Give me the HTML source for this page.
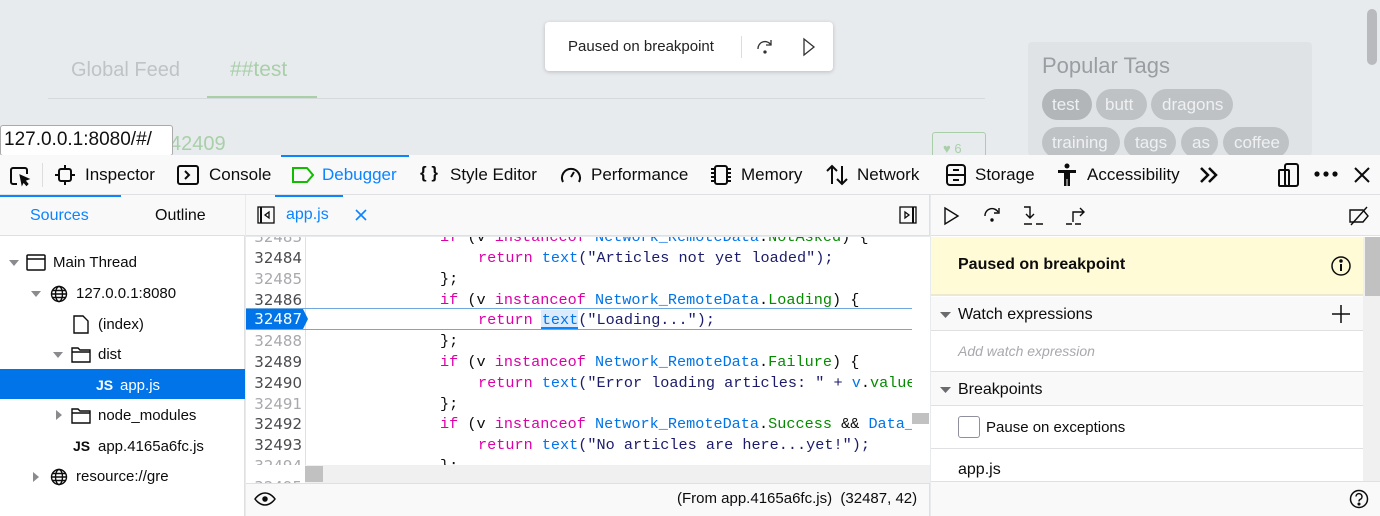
<!DOCTYPE html>
<html><head><meta charset="utf-8"><style>
*{box-sizing:border-box;margin:0;padding:0}
body{width:1380px;height:516px;overflow:hidden;position:relative;background:#e8ebee;font-family:"Liberation Sans","DejaVu Sans",sans-serif;color:#0c0c0d}
.a{position:absolute}
.mono{font-family:"Liberation Mono","DejaVu Sans Mono",monospace;font-size:15.2px;white-space:pre}
.k{color:#dd00a9}.b{color:#0074e8}.g{color:#058b00}.s{color:#1b1b6a}.d{color:#0c0c0d}
.ln{position:absolute;left:246px;width:56px;text-align:right;color:#4a4a4f;font-size:15px;font-family:"DejaVu Sans",sans-serif}
.ln.l{color:#a8a8ad}
.tab{position:absolute;top:165px;font-size:17px;color:#0c0c0d}
.tree{position:absolute;font-size:15px;color:#0c0c0d}
</style></head><body>
<!-- page -->
<div class="a" style="left:71px;top:59px;font-size:20px;color:#c0c3c6">Global Feed</div>
<div class="a" style="left:230px;top:58px;font-size:21px;color:#a9cfa9">##test</div>
<div class="a" style="left:207px;top:96px;width:110px;height:3px;background:#a9cfa9"></div>
<div class="a" style="left:48px;top:98px;width:937px;height:1px;background:#d6d9dc"></div>
<div class="a" style="left:170px;top:133px;font-size:20px;color:#a9cfa9">42409</div>
<div class="a" style="left:932px;top:132px;width:54px;height:26px;border:1px solid #a9cfa9;border-radius:3px;color:#a9cfa9;font-size:13px;padding:8px 0 0 10px">♥ 6</div>
<div class="a" style="left:1028px;top:42px;width:284px;height:114px;background:#e0e3e6;border-radius:4px"></div>
<div class="a" style="left:1042px;top:53px;font-size:22px;color:#9a9da1">Popular Tags</div>
<div class="a" style="left:1042px;top:89px;height:31px;width:50px;border-radius:16px;background:#b3b6b9"></div>
<div class="a" style="left:1096px;top:89px;height:31px;width:51px;border-radius:16px;background:#bfc2c5"></div>
<div class="a" style="left:1151px;top:89px;height:31px;width:82px;border-radius:16px;background:#bfc2c5"></div>
<div class="a" style="left:1042px;top:127px;height:31px;width:78px;border-radius:16px;background:#bfc2c5"></div>
<div class="a" style="left:1124px;top:127px;height:31px;width:52px;border-radius:16px;background:#bfc2c5"></div>
<div class="a" style="left:1181px;top:127px;height:31px;width:37px;border-radius:16px;background:#bfc2c5"></div>
<div class="a" style="left:1223px;top:127px;height:31px;width:66px;border-radius:16px;background:#bfc2c5"></div>
<div class="a" style="left:1052px;top:95px;font-size:17px;color:#eef0f2">test</div>
<div class="a" style="left:1105px;top:95px;font-size:17px;color:#eef0f2">butt</div>
<div class="a" style="left:1162px;top:95px;font-size:17px;color:#eef0f2">dragons</div>
<div class="a" style="left:1052px;top:133px;font-size:17px;color:#eef0f2">training</div>
<div class="a" style="left:1135px;top:133px;font-size:17px;color:#eef0f2">tags</div>
<div class="a" style="left:1192px;top:133px;font-size:17px;color:#eef0f2">as</div>
<div class="a" style="left:1234px;top:133px;font-size:17px;color:#eef0f2">coffee</div>
<div class="a" style="left:1367px;top:9px;width:10px;height:56px;border-radius:5px;background:#b8babd"></div>
<div class="a" style="left:0;top:125px;width:173px;height:31px;background:#fff;border:1px solid #aaa;border-radius:3px;font-size:19px;padding:3px 0 0 3px;color:#111">127.0.0.1:8080/#/</div>
<div class="a" style="left:545px;top:22px;width:288px;height:49px;background:#fff;border-radius:4px;box-shadow:0 1px 4px rgba(0,0,0,.2)"></div>
<div class="a" style="left:568px;top:38px;font-size:15px;color:#222">Paused on breakpoint</div>
<div class="a" style="left:741px;top:36px;width:1px;height:22px;background:#ddd"></div>
<svg class="a" style="left:754px;top:36px" width="22" height="22" viewBox="0 0 22 22" fill="none" stroke="#333" stroke-width="1.3"><path d="M4 13a7 7 0 0 1 13-4"/><path d="M17 4v5h-5"/><circle cx="11" cy="16" r="1" fill="#333"/></svg>
<svg class="a" style="left:800px;top:37px" width="18" height="20" viewBox="0 0 18 20" fill="none" stroke="#333" stroke-width="1.3"><path d="M4 2l10 8-10 8z"/></svg>

<!-- devtools toolbar -->
<div class="a" style="left:0;top:155px;width:1380px;height:40px;background:#f9f9fa;border-bottom:1px solid #e0e0e2"></div>
<div class="a" style="left:281px;top:155px;width:128px;height:2px;background:#0a84ff"></div>
<svg class="a" style="left:8px;top:164px" width="24" height="24" viewBox="0 0 24 24" fill="none" stroke="#0c0c0d" stroke-width="2"><path d="M9 20H5a2 2 0 0 1-2-2V6a2 2 0 0 1 2-2h12a2 2 0 0 1 2 2v4"/><path d="M12 11l9 4-4 1.5 3 3.5-1.5 1.5-3-3.5L14 21z" fill="#0c0c0d" stroke-width="1"/></svg>
<div class="a" style="left:42px;top:163px;width:1px;height:24px;background:#ddd"></div>
<svg class="a" style="left:54px;top:164px" width="22" height="22" viewBox="0 0 22 22" fill="none" stroke="#0c0c0d" stroke-width="2"><rect x="5" y="5" width="12" height="12" rx="2"/><path d="M11 1v4M11 17v4M1 11h4M17 11h4"/></svg>
<div class="tab" style="left:85px">Inspector</div>
<svg class="a" style="left:177px;top:165px" width="22" height="20" viewBox="0 0 22 20" fill="none" stroke="#0c0c0d" stroke-width="2"><rect x="1" y="1" width="20" height="18" rx="2"/><path d="M8 6l4 4-4 4"/></svg>
<div class="tab" style="left:209px">Console</div>
<svg class="a" style="left:291px;top:166px" width="24" height="18" viewBox="0 0 24 18" fill="none" stroke="#12bc00" stroke-width="2"><path d="M2 2h14l6 7-6 7H2z"/></svg>
<div class="tab" style="left:322px;color:#0a84ff">Debugger</div>
<div class="tab" style="left:420px;font-weight:bold;top:163px">{ }</div>
<div class="tab" style="left:450px">Style Editor</div>
<svg class="a" style="left:560px;top:165px" width="22" height="20" viewBox="0 0 22 20" fill="none" stroke="#0c0c0d" stroke-width="2"><path d="M3 17a9 9 0 1 1 16 0"/><path d="M11 12l3-5"/></svg>
<div class="tab" style="left:591px">Performance</div>
<svg class="a" style="left:709px;top:164px" width="24" height="22" viewBox="0 0 24 22" fill="none" stroke="#0c0c0d" stroke-width="2"><rect x="6" y="2" width="12" height="18" rx="2"/><path d="M2 5h4M2 9h4M2 13h4M2 17h4M18 5h4M18 9h4M18 13h4M18 17h4"/></svg>
<div class="tab" style="left:741px">Memory</div>
<svg class="a" style="left:825px;top:164px" width="24" height="22" viewBox="0 0 24 22" fill="none" stroke="#0c0c0d" stroke-width="2"><path d="M7 20V2M2 7l5-5 5 5M17 2v18M12 15l5 5 5-5"/></svg>
<div class="tab" style="left:857px">Network</div>
<svg class="a" style="left:945px;top:164px" width="22" height="22" viewBox="0 0 22 22" fill="none" stroke="#0c0c0d" stroke-width="2"><rect x="2" y="1" width="18" height="20" rx="3"/><path d="M2 11h18M8 6h6M8 16h6"/></svg>
<div class="tab" style="left:975px">Storage</div>
<svg class="a" style="left:1057px;top:163px" width="20" height="24" viewBox="0 0 20 24" fill="#0c0c0d"><circle cx="10" cy="3" r="2.5"/><path d="M1 7h18v3h-6v13h-2.5v-7h-1v7H7V10H1z"/></svg>
<div class="tab" style="left:1087px">Accessibility</div>
<svg class="a" style="left:1199px;top:166px" width="20" height="18" fill="none" stroke="#0c0c0d" stroke-width="2.5"><path d="M2 2l7 7-7 7M10 2l7 7-7 7"/></svg>
<svg class="a" style="left:1278px;top:163px" width="22" height="24" viewBox="0 0 22 24" fill="none" stroke="#0c0c0d" stroke-width="2"><rect x="7" y="1" width="13" height="22" rx="2"/><rect x="1" y="7" width="10" height="16" rx="1"/></svg>
<svg class="a" style="left:1314px;top:170px" width="24" height="8" fill="#0c0c0d"><circle cx="3" cy="4" r="2.6"/><circle cx="12" cy="4" r="2.6"/><circle cx="21" cy="4" r="2.6"/></svg>
<svg class="a" style="left:1353px;top:166px" width="18" height="18" viewBox="0 0 18 18" stroke="#0c0c0d" stroke-width="2"><path d="M2 2l14 14M16 2L2 16"/></svg>

<!-- panes -->
<div class="a" style="left:0;top:195px;width:245px;height:321px;background:#fff;border-right:1px solid #e0e0e2"></div>
<div class="a" style="left:0;top:195px;width:245px;height:41px;background:#f9f9fa;border-bottom:1px solid #e0e0e2"></div>
<div class="a" style="left:0;top:195px;width:121px;height:2px;background:#0a84ff"></div>
<div class="a" style="left:30px;top:207px;font-size:16px;color:#0a84ff">Sources</div>
<div class="a" style="left:155px;top:207px;font-size:16px">Outline</div>

<svg class="a" style="left:8px;top:257px" width="12" height="12"><path d="M1 3h10L6 9z" fill="#8a8a8f"/></svg>
<svg class="a" style="left:26px;top:254px" width="20" height="18" fill="none" stroke="#0c0c0d" stroke-width="1.5"><rect x="1" y="1" width="18" height="15" rx="1"/><path d="M1 5h18"/></svg>
<div class="tree" style="left:53px;top:254px">Main Thread</div>
<svg class="a" style="left:30px;top:288px" width="12" height="12"><path d="M1 3h10L6 9z" fill="#8a8a8f"/></svg>
<svg class="a" style="left:50px;top:285px" width="18" height="18" fill="none" stroke="#0c0c0d" stroke-width="1.4"><circle cx="9" cy="9" r="7.5"/><ellipse cx="9" cy="9" rx="3.5" ry="7.5"/><path d="M1.5 9h15M2.5 5.5h13M2.5 12.5h13"/></svg>
<div class="tree" style="left:76px;top:285px">127.0.0.1:8080</div>
<svg class="a" style="left:73px;top:315px" width="16" height="19" fill="none" stroke="#0c0c0d" stroke-width="1.4"><path d="M1 1h9l5 5v12H1z"/></svg>
<div class="tree" style="left:98px;top:316px">(index)</div>
<svg class="a" style="left:52px;top:349px" width="12" height="12"><path d="M1 3h10L6 9z" fill="#8a8a8f"/></svg>
<svg class="a" style="left:71px;top:346px" width="20" height="17" fill="none" stroke="#0c0c0d" stroke-width="1.4"><path d="M1 2h6l2 2h10v12H1z"/><path d="M1 6h18"/></svg>
<div class="tree" style="left:98px;top:346px">dist</div>
<div class="a" style="left:0;top:369px;width:245px;height:30px;background:#0074e8"></div>
<div class="tree" style="left:96px;top:377px;color:#fff;font-weight:bold;font-size:14px">JS</div>
<div class="tree" style="left:120px;top:377px;color:#fff">app.js</div>
<svg class="a" style="left:53px;top:409px" width="12" height="12"><path d="M3 1v10l6-5z" fill="#8a8a8f"/></svg>
<svg class="a" style="left:71px;top:407px" width="20" height="17" fill="none" stroke="#0c0c0d" stroke-width="1.4"><path d="M1 2h6l2 2h10v12H1z"/><path d="M1 6h18"/></svg>
<div class="tree" style="left:98px;top:407px">node_modules</div>
<div class="tree" style="left:73px;top:438px;font-weight:bold;font-size:14px">JS</div>
<div class="tree" style="left:98px;top:438px">app.4165a6fc.js</div>
<svg class="a" style="left:30px;top:471px" width="12" height="12"><path d="M3 1v10l6-5z" fill="#8a8a8f"/></svg>
<svg class="a" style="left:50px;top:468px" width="18" height="18" fill="none" stroke="#0c0c0d" stroke-width="1.4"><circle cx="9" cy="9" r="7.5"/><ellipse cx="9" cy="9" rx="3.5" ry="7.5"/><path d="M1.5 9h15M2.5 5.5h13M2.5 12.5h13"/></svg>
<div class="tree" style="left:76px;top:468px">resource://gre</div>

<!-- editor -->
<div class="a" style="left:246px;top:195px;width:684px;height:41px;background:#f9f9fa;border-bottom:1px solid #e0e0e2;border-right:1px solid #e0e0e2"></div>
<div class="a" style="left:275px;top:195px;width:68px;height:2px;background:#0a84ff"></div>
<svg class="a" style="left:257px;top:206px" width="18" height="18" fill="none" stroke="#0c0c0d" stroke-width="1.3"><rect x="1" y="1" width="16" height="16"/><path d="M4 1v16" stroke-width="2"/><path d="M12 6l-4 3 4 3z"/></svg>
<div class="a" style="left:286px;top:206px;font-size:16px;color:#0a84ff">app.js</div>
<svg class="a" style="left:355px;top:209px" width="12" height="12" stroke="#0a84ff" stroke-width="1.6"><path d="M1 1l10 10M11 1L1 11"/></svg>
<svg class="a" style="left:899px;top:206px" width="18" height="18" fill="none" stroke="#0c0c0d" stroke-width="1.3"><rect x="1" y="1" width="16" height="16"/><path d="M14 1v16" stroke-width="2"/><path d="M6 6l4 3-4 3z"/></svg>

<div class="a" style="left:246px;top:237px;width:666px;height:228px;overflow:hidden;background:#fff">
 <div class="a" style="left:59px;top:0;width:1px;height:228px;background:#e0e0e2"></div>
</div>
<div class="a" style="left:246px;top:237px;width:666px;height:228px;overflow:hidden">
<div class="ln l" style="left:0;top:-9px">32483</div>
<div class="a mono" style="left:194px;top:-9px"><span class="k">if</span> <span class="d">(v</span> <span class="k">instanceof</span> <span class="b">Network_RemoteData</span>.<span class="g">NotAsked</span>) {</div>
<div class="ln" style="left:0;top:12px">32484</div>
<div class="a mono" style="left:232px;top:12px"><span class="k">return</span> <span class="b">text</span><span class="s">("Articles not yet loaded");</span></div>
<div class="ln l" style="left:0;top:33px">32485</div>
<div class="a mono" style="left:194px;top:33px">};</div>
<div class="ln" style="left:0;top:54px">32486</div>
<div class="a mono" style="left:194px;top:54px"><span class="k">if</span> (v <span class="k">instanceof</span> <span class="b">Network_RemoteData</span>.<span class="g">Loading</span>) {</div>
<div class="a" style="left:0;top:71px;width:666px;height:22px;border-top:1px solid #6fa8dc;border-bottom:1px solid #6fa8dc"></div>
<div class="a" style="left:0;top:72px;width:56px;height:20px;background:#0074e8"></div>
<svg class="a" style="left:55px;top:72px" width="8" height="20"><path d="M0 0h2l5 10-5 10H0z" fill="#0074e8"/></svg>
<div class="ln" style="left:0;top:73px;color:#fff">32487</div>
<div class="a" style="left:295px;top:73px;width:37px;height:19px;background:#dcebfb;border-bottom:2px solid #0a84ff"></div>
<div class="a mono" style="left:232px;top:74px"><span class="k">return</span> <span class="b">text</span><span class="s">("Loading...");</span></div>
<div class="ln l" style="left:0;top:95px">32488</div>
<div class="a mono" style="left:194px;top:95px">};</div>
<div class="ln" style="left:0;top:116px">32489</div>
<div class="a mono" style="left:194px;top:116px"><span class="k">if</span> (v <span class="k">instanceof</span> <span class="b">Network_RemoteData</span>.<span class="g">Failure</span>) {</div>
<div class="ln" style="left:0;top:137px">32490</div>
<div class="a mono" style="left:232px;top:137px"><span class="k">return</span> <span class="b">text</span><span class="s">("Error loading articles: " + </span><span class="b">v</span>.<span class="g">value</span></div>
<div class="ln l" style="left:0;top:158px">32491</div>
<div class="a mono" style="left:194px;top:158px">};</div>
<div class="ln" style="left:0;top:178px">32492</div>
<div class="a mono" style="left:194px;top:178px"><span class="k">if</span> (v <span class="k">instanceof</span> <span class="b">Network_RemoteData</span>.<span class="g">Success</span> &amp;&amp; <span class="b">Data_</span></div>
<div class="ln" style="left:0;top:199px">32493</div>
<div class="a mono" style="left:232px;top:199px"><span class="k">return</span> <span class="b">text</span><span class="s">("No articles are here...yet!");</span></div>
<div class="ln l" style="left:0;top:220px">32494</div>
<div class="a mono" style="left:194px;top:220px">};</div>
</div>
<div class="a" style="left:912px;top:237px;width:18px;height:228px;background:#fff"></div>
<div class="a" style="left:912px;top:413px;width:17px;height:11px;background:#c1c1c1"></div>
<div class="a" style="left:305px;top:465px;width:625px;height:18px;background:#f0f0f0"></div>
<div class="a" style="left:305px;top:466px;width:18px;height:16px;background:#c1c1c1"></div>
<div class="a" style="left:246px;top:465px;width:59px;height:18px;background:#fff;overflow:hidden"><div class="ln l" style="left:0;top:13px">32495</div></div>
<div class="a" style="left:246px;top:483px;width:684px;height:33px;background:#f9f9fa;border-top:1px solid #e0e0e2;border-right:1px solid #e0e0e2"></div>
<svg class="a" style="left:254px;top:491px" width="22" height="16" fill="none" stroke="#0c0c0d" stroke-width="1.5"><path d="M1 8s4-6 10-6 10 6 10 6-4 6-10 6S1 8 1 8z"/><circle cx="11" cy="8" r="2" fill="#0c0c0d"/></svg>
<div class="a" style="left:677px;top:490px;font-size:15px;color:#0c0c0d">(From app.4165a6fc.js)&nbsp;&nbsp;(32487, 42)</div>

<!-- right -->
<div class="a" style="left:931px;top:195px;width:449px;height:321px;background:#fff"></div>
<div class="a" style="left:931px;top:195px;width:449px;height:41px;background:#f9f9fa;border-bottom:1px solid #e0e0e2"></div>
<svg class="a" style="left:943px;top:206px" width="18" height="20" fill="none" stroke="#0c0c0d" stroke-width="1.4"><path d="M2 2l13 8-13 8z"/></svg>
<svg class="a" style="left:982px;top:205px" width="22" height="20" fill="none" stroke="#0c0c0d" stroke-width="1.4"><path d="M3 11a7 7 0 0 1 13-4"/><path d="M17 3v5h-5"/><circle cx="10" cy="15" r="1" fill="#0c0c0d"/></svg>
<svg class="a" style="left:1023px;top:205px" width="22" height="22" fill="none" stroke="#0c0c0d" stroke-width="1.4"><path d="M1 2h6v10M3 9l4 4 4-4"/><path d="M1 19h8M13 19h7"/></svg>
<svg class="a" style="left:1065px;top:205px" width="22" height="22" fill="none" stroke="#0c0c0d" stroke-width="1.4"><path d="M8 17V7h11M15 3l4 4-4 4"/><path d="M1 19h6M10 19h6"/></svg>
<svg class="a" style="left:1348px;top:205px" width="22" height="22" fill="none" stroke="#0c0c0d" stroke-width="1.4"><path d="M2 5h13l5 6-5 6H2z"/><path d="M3 20L19 2"/></svg>
<div class="a" style="left:931px;top:237px;width:432px;height:59px;background:#fffbd6;border-bottom:2px solid #ece9d0"></div>
<div class="a" style="left:958px;top:256px;font-size:16px;font-weight:bold">Paused on breakpoint</div>
<svg class="a" style="left:1330px;top:255px" width="22" height="22" fill="none" stroke="#0c0c0d" stroke-width="1.5"><circle cx="11" cy="11" r="9"/><path d="M11 9v7" stroke-width="2"/><circle cx="11" cy="6" r="1" fill="#0c0c0d"/></svg>
<div class="a" style="left:1363px;top:237px;width:17px;height:279px;background:#f0f0f0"></div>
<div class="a" style="left:1365px;top:237px;width:15px;height:59px;background:#c1c1c1"></div>
<div class="a" style="left:931px;top:297px;width:432px;height:34px;background:#f9f9fa;border-bottom:1px solid #e0e0e2"></div>
<svg class="a" style="left:940px;top:311px" width="12" height="10"><path d="M0 1h11L5.5 7z" fill="#6a6a6f"/></svg>
<div class="a" style="left:958px;top:306px;font-size:16px">Watch expressions</div>
<svg class="a" style="left:1331px;top:304px" width="20" height="20" stroke="#0c0c0d" stroke-width="1.5"><path d="M10 1v18M1 10h18"/></svg>
<div class="a" style="left:958px;top:343px;font-size:14px;font-style:italic;color:#a8a8ad">Add watch expression</div>
<div class="a" style="left:931px;top:371px;width:432px;height:35px;background:#f9f9fa;border-top:1px solid #e0e0e2;border-bottom:1px solid #e0e0e2"></div>
<svg class="a" style="left:940px;top:386px" width="12" height="10"><path d="M0 1h11L5.5 7z" fill="#6a6a6f"/></svg>
<div class="a" style="left:958px;top:381px;font-size:16px">Breakpoints</div>
<div class="a" style="left:958px;top:416px;width:22px;height:22px;border:1px solid #8f8f9d;border-radius:3px;background:#fff"></div>
<div class="a" style="left:986px;top:419px;font-size:15px">Pause on exceptions</div>
<div class="a" style="left:931px;top:448px;width:432px;height:1px;background:#e0e0e2"></div>
<div class="a" style="left:958px;top:461px;font-size:16px">app.js</div>
<div class="a" style="left:931px;top:481px;width:449px;height:35px;background:#f9f9fa;border-top:1px solid #e0e0e2"></div>
<svg class="a" style="left:1349px;top:489px" width="20" height="20" fill="none" stroke="#0c0c0d" stroke-width="1.5"><circle cx="10" cy="10" r="8.5"/><path d="M7 7.5a3 3 0 1 1 4 3c-1 .5-1 1-1 2"/><circle cx="10" cy="15" r=".8" fill="#0c0c0d"/></svg>
</body></html>
